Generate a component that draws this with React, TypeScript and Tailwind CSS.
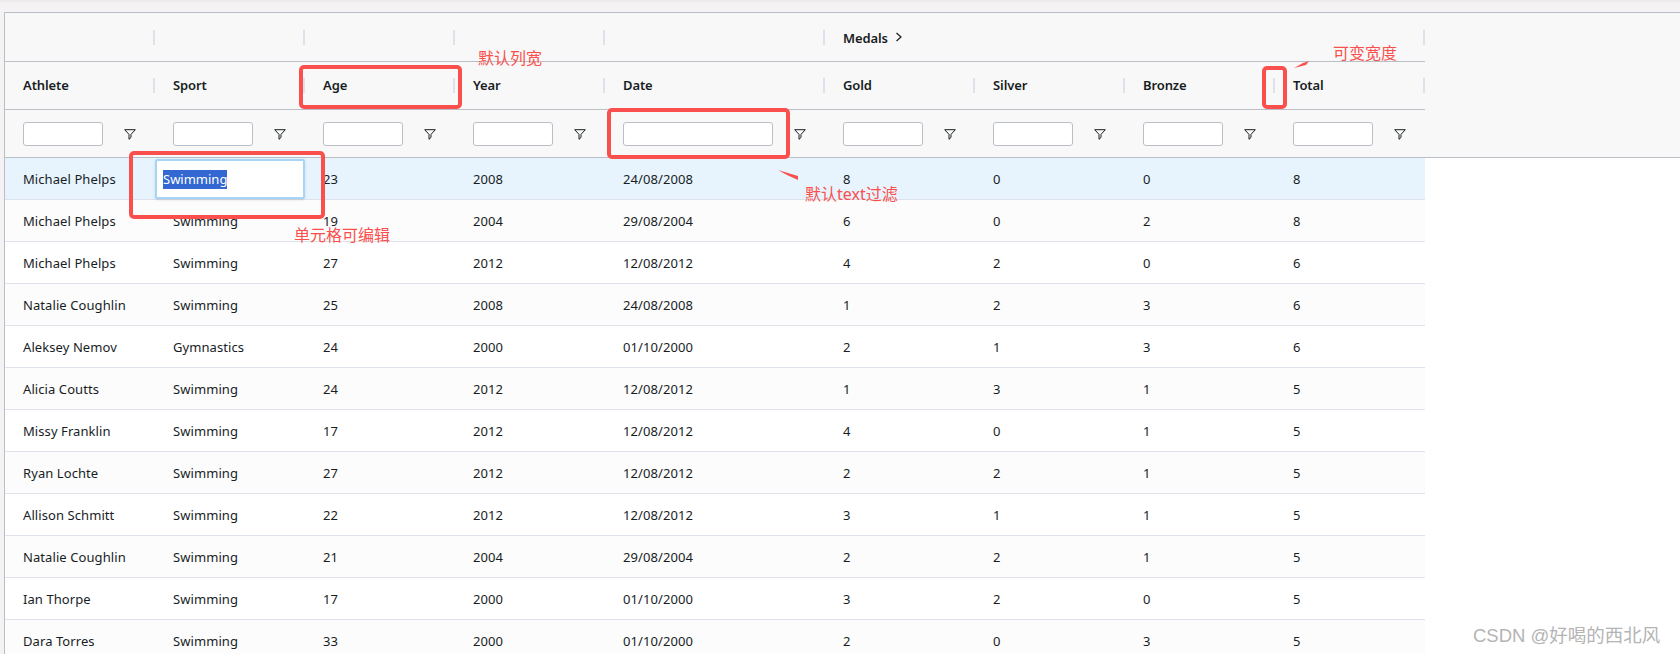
const font = "font-['Noto_Sans','Noto_Sans_CJK_SC',sans-serif]"

type Col = { name: string; wide?: boolean }

const columns: Col[] = [
  { name: "Athlete" },
  { name: "Sport" },
  { name: "Age" },
  { name: "Year" },
  { name: "Date", wide: true },
  { name: "Gold" },
  { name: "Silver" },
  { name: "Bronze" },
  { name: "Total" },
]

const rows = [
  ["Michael Phelps", "Swimming", "23", "2008", "24/08/2008", "8", "0", "0", "8"],
  ["Michael Phelps", "Swimming", "19", "2004", "29/08/2004", "6", "0", "2", "8"],
  ["Michael Phelps", "Swimming", "27", "2012", "12/08/2012", "4", "2", "0", "6"],
  ["Natalie Coughlin", "Swimming", "25", "2008", "24/08/2008", "1", "2", "3", "6"],
  ["Aleksey Nemov", "Gymnastics", "24", "2000", "01/10/2000", "2", "1", "3", "6"],
  ["Alicia Coutts", "Swimming", "24", "2012", "12/08/2012", "1", "3", "1", "5"],
  ["Missy Franklin", "Swimming", "17", "2012", "12/08/2012", "4", "0", "1", "5"],
  ["Ryan Lochte", "Swimming", "27", "2012", "12/08/2012", "2", "2", "1", "5"],
  ["Allison Schmitt", "Swimming", "22", "2012", "12/08/2012", "3", "1", "1", "5"],
  ["Natalie Coughlin", "Swimming", "21", "2004", "29/08/2004", "2", "2", "1", "5"],
  ["Ian Thorpe", "Swimming", "17", "2000", "01/10/2000", "3", "2", "0", "5"],
  ["Dara Torres", "Swimming", "33", "2000", "01/10/2000", "2", "0", "3", "5"],
]

const colWidth = (c: Col) => (c.wide ? "w-[220px]" : "w-[150px]")

const Resizer = ({ top }: { top: string }) => (
  <span className={`absolute right-0 h-[15px] w-[2px] bg-[#dde2eb] ${top}`} />
)

const FilterIcon = () => (
  <svg width="12" height="11" viewBox="0 0 12 11" fill="none" className="shrink-0">
    <path d="M0.7 0.7H11.3L7 5.4V8.4L5 10.3V5.4Z" stroke="#181d1f" strokeWidth="1" strokeLinejoin="round" />
  </svg>
)

const GroupRow = () => (
  <div className="flex h-[49px] border-b border-[#babfc7]">
    {columns.slice(0, 5).map((c) => (
      <div key={c.name} className={`relative ${colWidth(c)}`}>
        <Resizer top="top-[17px]" />
      </div>
    ))}
    <div className="relative flex w-[600px] items-center gap-[7px] pl-[18px] text-[13px] font-semibold leading-none tracking-[-0.1px] text-[#181d1f]">
      <span className="pt-[2px]">Medals</span>
      <svg width="8" height="10" viewBox="0 0 8 10" fill="none">
        <path d="M1.5 1L6 5L1.5 9" stroke="#181d1f" strokeWidth="1.2" />
      </svg>
      <Resizer top="top-[17px]" />
    </div>
  </div>
)

const HeaderRow = () => (
  <div className="flex h-[48px] border-b border-[#babfc7]">
    {columns.map((c) => (
      <div
        key={c.name}
        className={`relative flex items-center pl-[18px] pt-[1px] text-[13px] font-semibold tracking-[-0.1px] text-[#181d1f] ${colWidth(c)}`}
      >
        {c.name}
        <Resizer top="top-[16px]" />
      </div>
    ))}
  </div>
)

const FilterRow = () => (
  <div className="flex h-[47px] w-[1420px] pt-[1px]">
    {columns.map((c) => (
      <div key={c.name} className={`flex items-center gap-[21px] pl-[18px] ${colWidth(c)}`}>
        <input
          readOnly
          className={`h-[24px] rounded-[3px] border border-[#babfc7] bg-white ${c.wide ? "w-[150px]" : "w-[80px]"}`}
        />
        <FilterIcon />
      </div>
    ))}
  </div>
)

const CellEditor = ({ value }: { value: string }) => (
  <div className="flex h-[40px] w-[150px] items-center rounded-[2px] border-2 border-[#a6d5f8] bg-white pl-[6px] text-[13px] shadow-sm">
    <span className="bg-[#3367d1] leading-[19px] text-white">{value}</span>
  </div>
)

const DataRow = ({ cells, index }: { cells: string[]; index: number }) => {
  const bg = index === 0 ? "bg-[#e7f4fe]" : index % 2 ? "bg-[#fcfcfc]" : "bg-white"
  return (
    <div className={`flex h-[42px] w-[1420px] border-b border-[#dde2eb] ${bg}`}>
      {cells.map((text, i) =>
        index === 0 && i === 1 ? (
          <div key={i} className={`flex items-start pt-px ${colWidth(columns[i])}`}>
            <CellEditor value={text} />
          </div>
        ) : (
          <div
            key={i}
            className={`flex items-center pl-[18px] pt-[3px] text-[13px] tracking-[0.08px] text-[#181d1f] ${colWidth(columns[i])}`}
          >
            {text}
          </div>
        )
      )}
    </div>
  )
}

const Box = ({ className }: { className: string }) => (
  <div className={`absolute rounded-[5px] border-[4px] border-[#f9504d] ${className}`} />
)

const Note = ({ className, children }: { className: string; children: string }) => (
  <div className={`absolute whitespace-nowrap text-[16px] leading-none text-[#f9504d] ${className}`}>
    {children}
  </div>
)

export default function App() {
  return (
    <div className={`relative h-[654px] w-[1680px] overflow-hidden bg-[#f5f2f4] ${font}`}>
      <div className="h-[2px] bg-[#ececec]" />
      <div className="ml-[4px] mt-[10px] h-[642px] border-l border-t border-[#babfc7] bg-white">
        <div className="bg-[#f8f8f8]">
          <div className="w-[1420px]">
            <GroupRow />
            <HeaderRow />
          </div>
          <div className="border-b border-[#babfc7]">
            <FilterRow />
          </div>
        </div>
        {rows.map((r, i) => (
          <DataRow key={i} cells={r} index={i} />
        ))}
      </div>

      {/* red notes drawn over the screenshot */}
      <Box className="left-[299px] top-[65px] h-[44px] w-[163px]" />
      <Box className="left-[607px] top-[108px] h-[51px] w-[183px]" />
      <Box className="left-[129px] top-[151px] h-[68px] w-[196px]" />
      <Box className="left-[1262px] top-[66px] h-[43px] w-[25px]" />
      <Note className="left-[478px] top-[50px]">默认列宽</Note>
      <Note className="left-[294px] top-[227px]">单元格可编辑</Note>
      <Note className="left-[805px] top-[186px]">默认text过滤</Note>
      <Note className="left-[1333px] top-[45px]">可变宽度</Note>
      <svg className="absolute left-[778px] top-[170px]" width="22" height="11" viewBox="0 0 22 11">
        <path d="M0 0L20 6L20 10L9 5Z" fill="#f9504d" />
      </svg>
      <svg className="absolute left-[1294px] top-[60px]" width="16" height="9" viewBox="0 0 16 9">
        <path d="M0 8L9 3L15 1L12 5Z" fill="#f9504d" />
      </svg>

      <div className="absolute left-[1473px] top-[627px] whitespace-nowrap font-['Liberation_Sans','Noto_Sans_CJK_SC',sans-serif] text-[18.5px] leading-none text-[#b4b4b4]">
        CSDN @好喝的西北风
      </div>
    </div>
  )
}
